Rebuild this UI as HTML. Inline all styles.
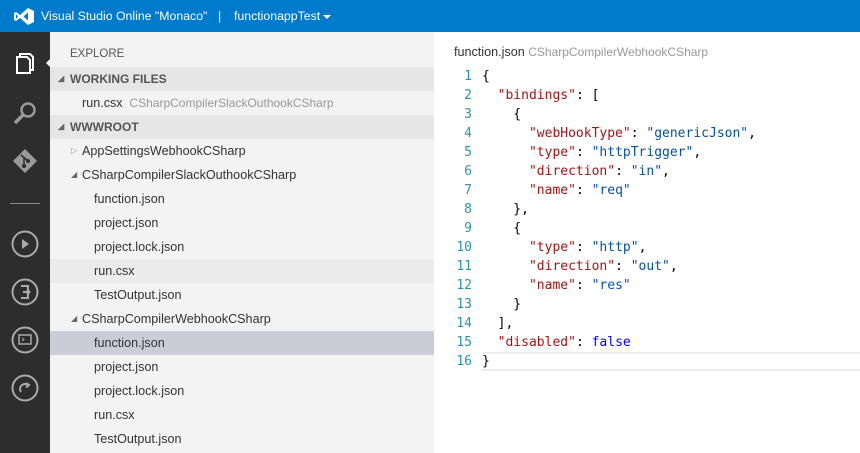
<!DOCTYPE html>
<html><head><style>
*{margin:0;padding:0;box-sizing:border-box}
body{width:860px;height:453px;overflow:hidden;font-family:"Liberation Sans",sans-serif;background:#fff;position:relative}
#top{position:absolute;left:0;top:0;width:860px;height:32px;background:#007acc;color:#fff;font-size:12.3px}
#top span{position:absolute;top:9px;white-space:nowrap}
#act{position:absolute;left:0;top:32px;width:50px;height:421px;background:#2d2d2d}
#side{position:absolute;left:50px;top:32px;width:384px;height:421px;background:#f3f3f3;font-size:12.6px;color:#333}
.r{position:absolute;left:0;width:384px;height:24px;line-height:24px;white-space:nowrap}
.h{background:#e6e6e6;font-weight:bold;font-size:12px;color:#555}
.tri{font-size:8px;color:#666;position:absolute}
#ed{position:absolute;left:434px;top:32px;width:426px;height:421px;background:#fff}
.ln{position:absolute;left:0;width:38px;text-align:right;color:#2b91af;font-family:"DejaVu Sans Mono",monospace;font-size:13px}
.cd{position:absolute;left:48px;white-space:pre;font-family:"DejaVu Sans Mono",monospace;font-size:13px;color:#000}
.k{color:#a31515}.s{color:#0451a5}.b{color:#0000ff}
</style></head><body>
<div id="top">
<svg style="position:absolute;left:14px;top:8px" width="20" height="17" viewBox="0 0 20 17"><path d="M14 0L20 3V14L14 17L6 10L2 13L0 12V5L2 4L6 7ZM14 4.5L9.5 8.5L14 12.5ZM2 6V11L4 8.5Z" fill="#fff"/></svg>
<span style="left:41px">Visual Studio Online "Monaco"</span>
<span style="left:218px">|</span>
<span style="left:234px">functionappTest</span>
<svg style="position:absolute;left:323px;top:15px" width="8" height="5"><path d="M0 0H8L4 4Z" fill="#fff"/></svg>
</div>
<div id="act">
<svg style="position:absolute;left:15px;top:19px" width="20" height="24" viewBox="0 0 20 24"><path d="M2 6H12L15 9V22H2Z" fill="none" stroke="#fff" stroke-width="2"/><path d="M5 6V3H15L18 6V19H15" fill="none" stroke="#fff" stroke-width="2"/></svg>
<div style="position:absolute;left:46px;top:26px;width:0;height:0;border:5px solid transparent;border-right-color:#f3f3f3;border-left:0"></div>
<svg style="position:absolute;left:12px;top:68px" width="26" height="26"><circle cx="16" cy="10" r="6.5" fill="none" stroke="#999" stroke-width="2.5"/><path d="M11 15L3 23" stroke="#999" stroke-width="3.5"/></svg>
<svg style="position:absolute;left:12px;top:116px" width="26" height="26"><path d="M13 1L25 13L13 25L1 13Z" fill="#999"/><circle cx="12" cy="18" r="2" fill="#2d2d2d"/><circle cx="16" cy="13" r="2" fill="#2d2d2d"/><path d="M12 18V9M9 7L16 13" stroke="#2d2d2d" stroke-width="1.5"/></svg>
<div style="position:absolute;left:10px;top:171px;width:30px;height:1px;background:#888"></div>
<svg style="position:absolute;left:10px;top:197px" width="30" height="190" fill="none" stroke="#aaa" stroke-width="2">
<circle cx="15" cy="15" r="12.5"/><path d="M12 10L19 15L12 20Z" fill="#aaa" stroke="none"/>
<circle cx="15" cy="63" r="12.5"/><path d="M11 57H18V69H11M13 63H19M17 60.5L19.5 63L17 65.5"/>
<circle cx="15" cy="111" r="12.5"/><rect x="9" y="106" width="12" height="9" stroke-width="1.5"/><path d="M12 109L14 110.5L12 112" stroke-width="1"/>
<circle cx="15" cy="159" r="12.5"/><path d="M11 163A5 5 0 0 1 18 156M16 154L19 156L16 158.5"/>
</svg>
</div>
<div id="side">
<div class="r" style="top:10px;left:20px;font-size:11.5px;color:#555">EXPLORE</div>
<div class="r h" style="top:35px"><span class="tri" style="left:8px">◢</span><span style="position:absolute;left:20px">WORKING FILES</span></div>
<div class="r" style="top:59px"><span style="position:absolute;left:32px">run.csx <span style="color:#999;font-size:12px">&nbsp;CSharpCompilerSlackOuthookCSharp</span></span></div>
<div class="r h" style="top:83px"><span class="tri" style="left:8px">◢</span><span style="position:absolute;left:20px">WWWROOT</span></div>
<div class="r" style="top:107px"><span class="tri" style="left:21px;color:#999">▷</span><span style="position:absolute;left:32px">AppSettingsWebhookCSharp</span></div>
<div class="r" style="top:131px"><span class="tri" style="left:21px">◢</span><span style="position:absolute;left:32px">CSharpCompilerSlackOuthookCSharp</span></div>
<div class="r" style="top:155px"><span style="position:absolute;left:44px">function.json</span></div>
<div class="r" style="top:179px"><span style="position:absolute;left:44px">project.json</span></div>
<div class="r" style="top:203px"><span style="position:absolute;left:44px">project.lock.json</span></div>
<div class="r" style="top:227px;background:#ebebeb"><span style="position:absolute;left:44px">run.csx</span></div>
<div class="r" style="top:251px"><span style="position:absolute;left:44px">TestOutput.json</span></div>
<div class="r" style="top:275px"><span class="tri" style="left:21px">◢</span><span style="position:absolute;left:32px">CSharpCompilerWebhookCSharp</span></div>
<div class="r" style="top:299px;background:#ccccd9"><span style="position:absolute;left:44px">function.json</span></div>
<div class="r" style="top:323px"><span style="position:absolute;left:44px">project.json</span></div>
<div class="r" style="top:347px"><span style="position:absolute;left:44px">project.lock.json</span></div>
<div class="r" style="top:371px"><span style="position:absolute;left:44px">run.csx</span></div>
<div class="r" style="top:395px"><span style="position:absolute;left:44px">TestOutput.json</span></div>
</div>
<div id="ed">
<div style="position:absolute;left:20px;top:13px;font-size:12.6px;color:#333">function.json <span style="color:#999;font-size:12px">CSharpCompilerWebhookCSharp</span></div>
<div style="position:absolute;left:48px;top:320px;width:378px;height:19px;border-top:2px solid #ececec;border-bottom:2px solid #ececec"></div>
<div id="code" style="position:absolute;left:0;top:35px;line-height:19px">
<div class="ln" style="top:0">1</div><div class="cd" style="top:0">{</div>
<div class="ln" style="top:19px">2</div><div class="cd" style="top:19px">  <span class="k">"bindings"</span>: [</div>
<div class="ln" style="top:38px">3</div><div class="cd" style="top:38px">    {</div>
<div class="ln" style="top:57px">4</div><div class="cd" style="top:57px">      <span class="k">"webHookType"</span>: <span class="s">"genericJson"</span>,</div>
<div class="ln" style="top:76px">5</div><div class="cd" style="top:76px">      <span class="k">"type"</span>: <span class="s">"httpTrigger"</span>,</div>
<div class="ln" style="top:95px">6</div><div class="cd" style="top:95px">      <span class="k">"direction"</span>: <span class="s">"in"</span>,</div>
<div class="ln" style="top:114px">7</div><div class="cd" style="top:114px">      <span class="k">"name"</span>: <span class="s">"req"</span></div>
<div class="ln" style="top:133px">8</div><div class="cd" style="top:133px">    },</div>
<div class="ln" style="top:152px">9</div><div class="cd" style="top:152px">    {</div>
<div class="ln" style="top:171px">10</div><div class="cd" style="top:171px">      <span class="k">"type"</span>: <span class="s">"http"</span>,</div>
<div class="ln" style="top:190px">11</div><div class="cd" style="top:190px">      <span class="k">"direction"</span>: <span class="s">"out"</span>,</div>
<div class="ln" style="top:209px">12</div><div class="cd" style="top:209px">      <span class="k">"name"</span>: <span class="s">"res"</span></div>
<div class="ln" style="top:228px">13</div><div class="cd" style="top:228px">    }</div>
<div class="ln" style="top:247px">14</div><div class="cd" style="top:247px">  ],</div>
<div class="ln" style="top:266px">15</div><div class="cd" style="top:266px">  <span class="k">"disabled"</span>: <span class="b">false</span></div>
<div class="ln" style="top:285px">16</div><div class="cd" style="top:285px">}</div>
</div>
</div>
</body></html>
